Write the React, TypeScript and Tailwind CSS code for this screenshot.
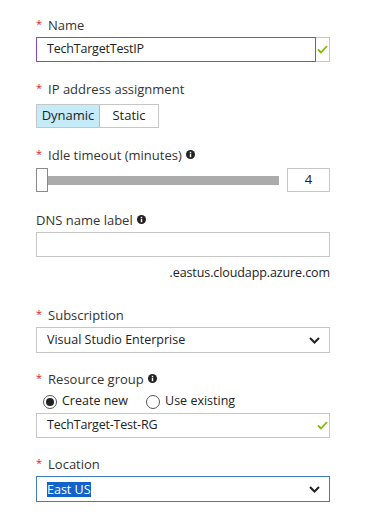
import React from 'react'

const font = { fontFamily: '"Open Sans", "Noto Sans", Arial, sans-serif' }

function Star() {
    return <span className="text-[#e0202e] text-[11px] mr-[6px] relative top-[-2px]">*</span>
}

function Info() {
    return (
        <svg width="9" height="9" viewBox="0 0 10 10" className="inline-block ml-[4px] relative top-[-1px]">
            <circle cx="5" cy="5" r="5" fill="#222" />
            <rect x="4.2" y="4.2" width="1.6" height="3.8" fill="#fff" />
            <rect x="4.2" y="2" width="1.6" height="1.5" fill="#fff" />
        </svg>
    )
}

function Label({ text, required, info }: { text: string; required?: boolean; info?: boolean }) {
    return (
        <div className="h-[17px] leading-[17px] text-[13px] text-[#333] flex items-center">
            {required && <Star />}
            <span>{text}</span>
            {info && <Info />}
        </div>
    )
}

function Check() {
    return (
        <svg width="11" height="9" viewBox="0 0 11 9">
            <path d="M1 4.5 L4 7.5 L10 1" stroke="#7fba00" strokeWidth="1.8" fill="none" />
        </svg>
    )
}

function Chevron() {
    return (
        <svg width="11" height="7" viewBox="0 0 11 7">
            <path d="M1 1 L5.5 5.5 L10 1" stroke="#222" strokeWidth="2" fill="none" />
        </svg>
    )
}

function ValidInput({ value, focused }: { value: string; focused?: boolean }) {
    return (
        <div className="flex h-[25px] mt-[3px]">
            <div className={`flex-1 flex items-center pl-[10px] text-[12.5px] tracking-[-0.2px] text-[#222] ${focused ? 'border-[1.5px] border-[#8a4bb8]' : 'border-y border-l border-[#c6c6c6]'}`}>
                {value}
            </div>
            <div className="w-[14px] flex items-center justify-center border-y border-r border-[#c6c6c6]">
                <Check />
            </div>
        </div>
    )
}

function Select({ value, active }: { value: string; active?: boolean }) {
    return (
        <div className={`flex items-center justify-between h-[26px] mt-[3px] pl-[10px] pr-[9px] text-[12.5px] border ${active ? 'border-[#3d7cc0]' : 'border-[#c6c6c6]'}`}>
            {active ? (
                <span className="bg-[#1262c8] text-white leading-[15px]">{value}</span>
            ) : (
                <span className="text-[#222]">{value}</span>
            )}
            <Chevron />
        </div>
    )
}

function Radio({ checked, label }: { checked?: boolean; label: string }) {
    return (
        <div className="flex items-center gap-[5px]">
            <span className="w-[14px] h-[14px] rounded-full border border-[#555] flex items-center justify-center">
                {checked && <span className="w-[8px] h-[8px] rounded-full bg-[#222]" />}
            </span>
            <span>{label}</span>
        </div>
    )
}

export default function App() {
    return (
        <div className="w-[367px] h-[520px] bg-white pt-[17px] pl-[36px]" style={font}>
            <div className="w-[294px] flex flex-col">
                {/* Name */}
                <Label text="Name" required />
                <ValidInput value="TechTargetTestIP" focused />

                {/* IP address assignment */}
                <div className="mt-[19px]">
                    <Label text="IP address assignment" required />
                </div>
                <div className="flex mt-[6px] h-[24px] text-[13px] text-[#222] w-[123px] border border-[#c6c6c6]">
                    <div className="w-[63px] bg-[#c5ebf9] border-r border-[#b8b8b8] flex items-center justify-center">Dynamic</div>
                    <div className="flex-1 flex items-center justify-center">Static</div>
                </div>

                {/* Idle timeout */}
                <div className="mt-[19px]">
                    <Label text="Idle timeout (minutes)" required info />
                </div>
                <div className="flex items-center mt-[4px] h-[24px]">
                    <div className="w-[12px] h-[24px] border border-[#8a8a8a] bg-white" />
                    <div className="w-[231px] h-[9px] bg-[#ababab]" />
                    <div className="ml-auto w-[43px] h-[24px] border border-[#c6c6c6] flex items-center justify-center text-[13px] text-[#222]">4</div>
                </div>

                {/* DNS name label */}
                <div className="mt-[20px]">
                    <Label text="DNS name label" info />
                </div>
                <div className="h-[25px] mt-[3px] border border-[#c6c6c6]" />
                <div className="mt-[7px] h-[17px] leading-[17px] text-right text-[12.5px] tracking-[-0.1px] text-[#222]">.eastus.cloudapp.azure.com</div>

                {/* Subscription */}
                <div className="mt-[26px]">
                    <Label text="Subscription" required />
                </div>
                <Select value="Visual Studio Enterprise" />

                {/* Resource group */}
                <div className="mt-[18px]">
                    <Label text="Resource group" required info />
                </div>
                <div className="flex gap-[18px] mt-[5px] pl-[7px] h-[17px] text-[12.5px] text-[#222]">
                    <Radio checked label="Create new" />
                    <Radio label="Use existing" />
                </div>
                <ValidInput value="TechTarget-Test-RG" />

                {/* Location */}
                <div className="mt-[18px]">
                    <Label text="Location" required />
                </div>
                <Select value="East US" active />
            </div>
        </div>
    )
}
